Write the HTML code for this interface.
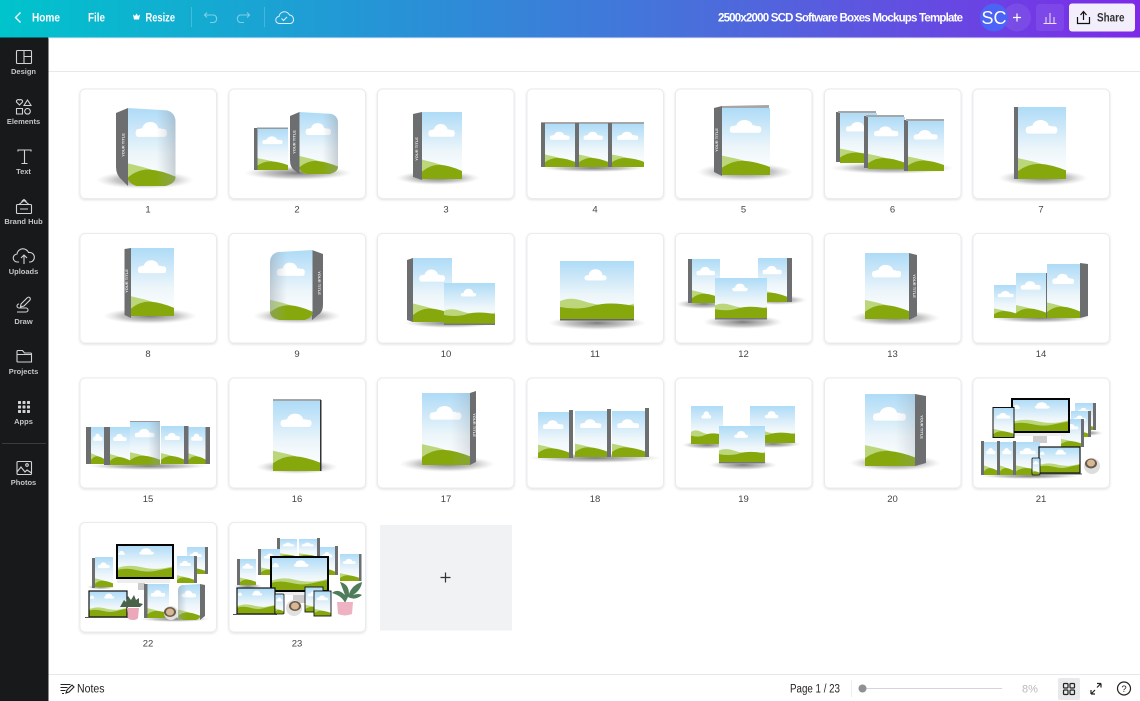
<!DOCTYPE html>
<html><head><meta charset="utf-8"><style>
html,body{margin:0;padding:0;background:#fff;width:1140px;height:701px;overflow:hidden}
svg{display:block;font-family:"Liberation Sans",sans-serif}
.n{font-size:9.5px;fill:#444;text-anchor:middle}
.s{font-size:7.5px;font-weight:bold;fill:#c4c5c7;text-anchor:middle}
.t{font-size:11.5px;font-weight:bold;fill:#fff}
.y{font-size:4px;font-weight:bold;fill:#e6e6e6;text-anchor:middle}
.i{fill:none;stroke:#d2d3d5;stroke-width:1.1}
.h{fill:none;stroke:#fff;stroke-width:1.3}
.c{fill:#fff;stroke:#e9ebee;stroke-width:1;filter:url(#cs)}
.g{fill:#6d6e70}
.m{fill:none;stroke:#050505;stroke-width:2}
</style></head><body>
<svg width="1140" height="701" viewBox="0 0 1140 701" xmlns="http://www.w3.org/2000/svg">
<defs>
<linearGradient id="bar" x1="0" x2="1" y1="0" y2="0"><stop offset="0" stop-color="#00c4cc"/><stop offset=".33" stop-color="#2595d6"/><stop offset=".62" stop-color="#4b6ddb"/><stop offset="1" stop-color="#7d2ae8"/></linearGradient>
<linearGradient id="sky" x1="0" x2="0" y1="0" y2="1"><stop offset="0" stop-color="#aedbf7"/><stop offset=".6" stop-color="#eef6fa"/><stop offset="1" stop-color="#fff"/></linearGradient>
<linearGradient id="fade" x1="0" x2="1" y1="0" y2="0"><stop offset=".6" stop-color="#9aa7b3" stop-opacity="0"/><stop offset="1" stop-color="#8f9aa6" stop-opacity=".45"/></linearGradient>
<linearGradient id="fadel" x1="1" x2="0" y1="0" y2="0"><stop offset=".6" stop-color="#9aa7b3" stop-opacity="0"/><stop offset="1" stop-color="#8f9aa6" stop-opacity=".45"/></linearGradient>
<radialGradient id="sh"><stop offset="0" stop-color="#7c7c7c"/><stop offset=".6" stop-color="#b4b4b4" stop-opacity=".75"/><stop offset="1" stop-color="#d4d4d4" stop-opacity="0"/></radialGradient>
<filter id="cs" x="-5%" y="-5%" width="110%" height="110%"><feDropShadow dx="0" dy="1" stdDeviation="1.2" flood-color="#000" flood-opacity=".12"/></filter>
<symbol id="a" viewBox="0 0 100 100" preserveAspectRatio="none">
<rect width="100" height="100" fill="url(#sky)"/>
<g fill="#fff"><rect x="16" y="27" width="66" height="10" rx="5"/><ellipse cx="47" cy="27" rx="17" ry="9"/><ellipse cx="66" cy="31" rx="10" ry="5"/><ellipse cx="29" cy="31" rx="9" ry="5"/></g>
<path d="M0 71Q30 75 60 81T100 88V100H0Z" fill="#bcd67c"/>
<path d="M0 89Q22 78 46 79T100 88V100H0Z" fill="#86a80c"/>
</symbol>
<symbol id="r" viewBox="0 0 100 100" preserveAspectRatio="none">
<clipPath id="rc"><path d="M0 0L82 3Q100 6 100 18V88Q100 97 78 100H18Q6 98 0 92Z"/></clipPath>
<g clip-path="url(#rc)"><use href="#a" width="100" height="100"/><rect width="100" height="100" fill="url(#fade)"/></g>
</symbol>
<symbol id="l" viewBox="0 0 100 100" preserveAspectRatio="none">
<clipPath id="lc"><path d="M100 0L18 3Q0 6 0 18V88Q0 97 22 100H82Q94 98 100 92Z"/></clipPath>
<g clip-path="url(#lc)"><use href="#a" width="100" height="100"/><rect width="100" height="100" fill="url(#fadel)"/></g>
</symbol>
<symbol id="w" viewBox="0 0 100 100" preserveAspectRatio="none">
<rect width="100" height="100" fill="url(#sky)"/>
<g fill="#fff"><rect x="33" y="24" width="30" height="9" rx="4.500"/><ellipse cx="48" cy="23" rx="9" ry="9"/></g>
<path d="M0 68Q14 60 32 68T72 76T100 72V100H0Z" fill="#bcd67c"/>
<path d="M0 78Q25 84 45 76T100 76V100H0Z" fill="#86a80c"/>
</symbol>
<symbol id="w2" viewBox="0 0 100 100" preserveAspectRatio="none">
<rect width="100" height="100" fill="url(#sky)"/>
<g fill="#fff"><rect x="40" y="20" width="26" height="9" rx="4.500"/><ellipse cx="52" cy="19" rx="9" ry="9"/><rect x="2" y="24" width="12" height="6" rx="3"/><ellipse cx="8" cy="23" rx="4" ry="5"/></g>
<path d="M0 70Q20 58 40 66T75 72T100 64V100H0Z" fill="#bcd67c"/>
<path d="M0 76Q15 68 35 76T70 78T100 68V100H0Z" fill="#86a80c"/>
</symbol>
</defs>

<rect width="1140" height="701" fill="#fff"/>
<rect x="48" y="71" width="1092" height="1" fill="#e6e8ea"/>
<rect x="48" y="674" width="1092" height="1" fill="#e6e8ea"/>

<!-- cards -->
<g class="c">
<rect x="80" y="89" width="136.500" height="109.500" rx="5"/><rect x="229" y="89" width="136.500" height="109.500" rx="5"/><rect x="377.500" y="89" width="136.500" height="109.500" rx="5"/><rect x="527" y="89" width="136.500" height="109.500" rx="5"/><rect x="675.500" y="89" width="136.500" height="109.500" rx="5"/><rect x="824.500" y="89" width="136.500" height="109.500" rx="5"/><rect x="973" y="89" width="136.500" height="109.500" rx="5"/>
<rect x="80" y="233.500" width="136.500" height="109.500" rx="5"/><rect x="229" y="233.500" width="136.500" height="109.500" rx="5"/><rect x="377.500" y="233.500" width="136.500" height="109.500" rx="5"/><rect x="527" y="233.500" width="136.500" height="109.500" rx="5"/><rect x="675.500" y="233.500" width="136.500" height="109.500" rx="5"/><rect x="824.500" y="233.500" width="136.500" height="109.500" rx="5"/><rect x="973" y="233.500" width="136.500" height="109.500" rx="5"/>
<rect x="80" y="378" width="136.500" height="110" rx="5"/><rect x="229" y="378" width="136.500" height="110" rx="5"/><rect x="377.500" y="378" width="136.500" height="110" rx="5"/><rect x="527" y="378" width="136.500" height="110" rx="5"/><rect x="675.500" y="378" width="136.500" height="110" rx="5"/><rect x="824.500" y="378" width="136.500" height="110" rx="5"/><rect x="973" y="378" width="136.500" height="110" rx="5"/>
<rect x="80" y="522.500" width="136.500" height="109.500" rx="5"/><rect x="229" y="522.500" width="136.500" height="109.500" rx="5"/>
</g>
<rect x="380" y="525" width="132" height="105.500" fill="#f1f2f4"/>
<path d="M445.500 572.500v10M440.500 577.500h10" stroke="#333" stroke-width="1.200"/>

<!-- labels -->
<g class="n">
<text x="148" y="212.500">1</text><text x="297" y="212.500">2</text><text x="446" y="212.500">3</text><text x="595" y="212.500">4</text><text x="743.500" y="212.500">5</text><text x="892.500" y="212.500">6</text><text x="1041" y="212.500">7</text>
<text x="148" y="357">8</text><text x="297" y="357">9</text><text x="446" y="357">10</text><text x="595" y="357">11</text><text x="743.500" y="357">12</text><text x="892.500" y="357">13</text><text x="1041" y="357">14</text>
<text x="148" y="502">15</text><text x="297" y="502">16</text><text x="446" y="502">17</text><text x="595" y="502">18</text><text x="743.500" y="502">19</text><text x="892.500" y="502">20</text><text x="1041" y="502">21</text>
<text x="148" y="646.500">22</text><text x="297" y="646.500">23</text>
</g>

<!-- 1 -->
<ellipse cx="145" cy="180" rx="49" ry="9" fill="url(#sh)"/>
<path class="g" d="M116 113L128 108V186L122 180Q116 175 116 167Z"/>
<use href="#r" x="128" y="108" width="47.500" height="78"/>
<text class="y" transform="translate(124.500,145) rotate(-90)">YOUR TITLE</text>
<!-- 2 -->
<ellipse cx="298" cy="173" rx="54" ry="7" fill="url(#sh)"/>
<rect class="g" x="254" y="128" width="3.500" height="42"/>
<rect x="257" y="127.500" width="31" height="2" fill="#999"/>
<use href="#a" x="257.500" y="129" width="30.500" height="41"/>
<path class="g" d="M290 116L299.500 112V174L294 170Q290 167 290 160Z"/>
<use href="#r" x="299.500" y="112" width="38.500" height="62"/>
<text class="y" transform="translate(295.500,142) rotate(-90)">YOUR TITLE</text>
<!-- 3 -->
<ellipse cx="438" cy="178" rx="42" ry="7" fill="url(#sh)"/>
<path class="g" d="M413 114L422 112V180L413 177Z"/>
<use href="#a" x="422" y="112" width="40" height="67"/>
<text class="y" transform="translate(418,149) rotate(-90)">YOUR TITLE</text>
<!-- 4 -->
<ellipse cx="593" cy="168" rx="52" ry="4" fill="url(#sh)"/>
<rect x="541" y="122" width="103" height="2" fill="#a4a6a8"/>
<rect class="g" x="541" y="123" width="4" height="44"/><use href="#a" x="545" y="124" width="30" height="43"/>
<rect class="g" x="575" y="123" width="4" height="44"/><use href="#a" x="579" y="124" width="29" height="43"/>
<rect class="g" x="608" y="123" width="4" height="44"/><use href="#a" x="612" y="124" width="32" height="43"/>
<!-- 5 -->
<ellipse cx="745" cy="172" rx="48" ry="9" fill="url(#sh)"/>
<path d="M722 106L769 105V108L722 109Z" fill="#a4a6a8"/>
<path class="g" d="M714 108L722 106V176L714 172Z"/>
<use href="#a" x="722" y="108" width="48" height="67"/>
<text class="y" transform="translate(718,140) rotate(-90)">YOUR TITLE</text>
<!-- 6 -->
<ellipse cx="892" cy="168" rx="62" ry="6" fill="url(#sh)"/>
<rect class="g" x="836" y="112" width="4" height="50"/><use href="#a" x="840" y="113" width="37" height="50"/><rect x="838" y="111" width="38" height="2" fill="#a4a6a8"/>
<rect class="g" x="864" y="116" width="4" height="52"/><use href="#a" x="868" y="117" width="37" height="52"/><rect x="866" y="115" width="38" height="2" fill="#a4a6a8"/>
<rect class="g" x="904" y="120" width="4" height="51"/><use href="#a" x="908" y="121" width="36" height="50"/><rect x="906" y="119" width="38" height="2" fill="#a4a6a8"/>
<!-- 7 -->
<ellipse cx="1043" cy="178" rx="45" ry="8" fill="url(#sh)"/>
<rect class="g" x="1014" y="107" width="4" height="72"/>
<use href="#a" x="1018" y="107" width="48" height="72"/>
<!-- 8 -->
<ellipse cx="150" cy="316" rx="47" ry="8" fill="url(#sh)"/>
<path class="g" d="M124.500 249L131 248V318L124.500 315Z"/>
<use href="#a" x="131" y="248" width="43" height="68"/>
<text class="y" transform="translate(128,281) rotate(-90)">YOUR TITLE</text>
<!-- 9 -->
<ellipse cx="297" cy="316" rx="44" ry="8" fill="url(#sh)"/>
<path class="g" d="M323 254L312 250V320L318 315Q323 312 323 305Z"/>
<use href="#l" x="270" y="250" width="42.500" height="70"/>
<text class="y" transform="translate(318,283) rotate(90)">YOUR TITLE</text>
<!-- 10 -->
<ellipse cx="450" cy="323" rx="46" ry="5" fill="url(#sh)"/>
<path class="g" d="M407 260L413 258V322L407 320Z"/>
<use href="#a" x="413" y="258" width="39" height="64"/>
<use href="#w" x="444" y="283" width="51" height="41"/>
<rect x="444" y="323.500" width="51" height="1.500" fill="#777"/>
<!-- 11 -->
<ellipse cx="597" cy="323" rx="49" ry="7" fill="url(#sh)"/>
<use href="#w" x="560" y="261" width="74" height="59"/>
<rect x="560" y="319" width="74" height="1.500" fill="#666"/>
<!-- 12 -->
<ellipse cx="704" cy="304" rx="28" ry="5" fill="url(#sh)"/>
<ellipse cx="777" cy="300" rx="30" ry="5" fill="url(#sh)"/>
<ellipse cx="743" cy="322" rx="40" ry="7" fill="url(#sh)"/>
<rect class="g" x="688" y="259" width="4" height="44"/><use href="#a" x="692" y="259" width="28" height="44"/>
<use href="#a" x="758" y="258" width="29" height="44"/><rect class="g" x="787" y="258" width="5" height="44"/>
<use href="#w" x="715" y="278" width="52" height="40"/><rect x="715" y="318" width="52" height="1.500" fill="#777"/>
<!-- 13 -->
<ellipse cx="895" cy="318" rx="45" ry="8" fill="url(#sh)"/>
<use href="#a" x="865" y="253" width="44" height="66"/>
<path class="g" d="M909 253L917 255V316L909 320Z"/>
<text class="y" transform="translate(913,286) rotate(90)">YOUR TITLE</text>
<!-- 14 -->
<ellipse cx="1040" cy="318" rx="50" ry="5" fill="url(#sh)"/>
<use href="#a" x="994" y="285" width="24" height="33"/><rect class="g" x="1018" y="285" width="2.500" height="33"/>
<use href="#a" x="1016" y="273" width="30" height="45"/><rect class="g" x="1046" y="273" width="3.500" height="45"/>
<use href="#a" x="1047" y="264" width="33" height="54"/><path class="g" d="M1080 263L1088 264V316L1080 318Z"/>
<!-- 15 -->
<ellipse cx="148" cy="466" rx="60" ry="4" fill="url(#sh)"/>
<rect class="g" x="86" y="427" width="5" height="37"/><use href="#a" x="91" y="427" width="14" height="37"/>
<rect class="g" x="104" y="427" width="6" height="38"/><use href="#a" x="110" y="427" width="20" height="38"/>
<use href="#a" x="161" y="426" width="23" height="38"/><rect class="g" x="184" y="426" width="4.500" height="38"/>
<use href="#a" x="188.500" y="427" width="17" height="37"/><rect class="g" x="205.500" y="427" width="4.500" height="37"/>
<use href="#a" x="130" y="421" width="30" height="44"/><rect x="130" y="421" width="30" height="44" fill="url(#fade)"/><rect x="130" y="421" width="30" height="1" fill="#999"/>
<!-- 16 -->
<ellipse cx="297" cy="467" rx="41" ry="7" fill="url(#sh)"/>
<rect x="273" y="399" width="48" height="2" fill="#a4a6a8"/>
<use href="#a" x="273" y="401" width="47" height="70"/>
<rect x="320" y="400" width="1.500" height="71" fill="#333"/>
<!-- 17 -->
<ellipse cx="447" cy="464" rx="48" ry="8" fill="url(#sh)"/>
<use href="#a" x="422" y="393" width="48" height="72"/>
<rect x="422" y="393" width="48" height="72" fill="url(#fade)" opacity=".6"/>
<path class="g" d="M470 393L476 391V462L470 465Z"/>
<text class="y" transform="translate(473,425) rotate(90)">YOUR TITLE</text>
<!-- 18 -->
<ellipse cx="595" cy="458" rx="67" ry="5" fill="url(#sh)"/>
<use href="#a" x="538" y="412" width="31" height="46"/><rect class="g" x="569" y="410" width="4" height="48"/>
<use href="#a" x="575" y="411" width="32" height="46"/><rect class="g" x="607" y="409" width="4" height="48"/>
<use href="#a" x="612" y="411" width="33" height="46"/><rect class="g" x="645" y="408" width="4" height="49"/>
<!-- 19 -->
<ellipse cx="707" cy="445" rx="25" ry="4" fill="url(#sh)"/>
<ellipse cx="773" cy="444" rx="28" ry="4" fill="url(#sh)"/>
<ellipse cx="743" cy="465" rx="34" ry="5" fill="url(#sh)"/>
<use href="#w" x="691" y="406" width="32" height="38"/>
<use href="#w" x="750" y="406" width="45" height="37"/>
<use href="#w" x="719" y="426" width="46" height="36"/><rect x="719" y="462" width="46" height="1.300" fill="#777"/>
<!-- 20 -->
<ellipse cx="895" cy="463" rx="46" ry="8" fill="url(#sh)"/>
<use href="#a" x="865" y="394" width="50" height="72"/>
<rect x="865" y="394" width="50" height="72" fill="url(#fade)" opacity=".6"/>
<path class="g" d="M915 394L926 396V463L915 466Z"/>
<text class="y" transform="translate(920.500,427) rotate(90)">YOUR TITLE</text>
<!-- 21 -->
<ellipse cx="1030" cy="476" rx="50" ry="3" fill="url(#sh)"/>
<ellipse cx="1085" cy="433" rx="18" ry="3" fill="url(#sh)"/>
<use href="#a" x="1075" y="403" width="18" height="27"/><rect class="g" x="1093" y="403" width="3" height="27"/>
<use href="#a" x="1071" y="411" width="18" height="26"/><rect class="g" x="1088" y="411" width="3" height="26"/>
<use href="#a" x="1061" y="419" width="21" height="28"/><rect class="g" x="1081" y="419" width="3" height="28"/>
<rect x="1033" y="436" width="14" height="7" fill="#ccc"/><rect x="1014" y="432" width="52" height="4" fill="#eee"/>
<use href="#w2" x="1012" y="399" width="57" height="33"/><rect class="m" x="1012" y="399" width="57" height="33"/>
<use href="#a" x="993" y="407.500" width="21" height="30"/><rect x="993" y="407.500" width="21" height="30" fill="none" stroke="#111" stroke-width="1"/>
<rect class="g" x="981" y="441" width="3" height="34"/><use href="#a" x="984" y="442" width="14" height="33"/>
<rect class="g" x="997" y="441" width="3" height="34"/><use href="#a" x="1000" y="442" width="14" height="33"/>
<rect class="g" x="1013" y="441" width="3" height="34"/><use href="#a" x="1016" y="442" width="24" height="33"/>
<use href="#w2" x="1039" y="447" width="41" height="26"/><rect x="1039" y="447" width="41" height="26" fill="none" stroke="#111" stroke-width="1.200"/>
<rect x="1034" y="473.500" width="48" height="1" fill="#555"/>
<use href="#a" x="1032" y="458" width="8" height="17"/><rect x="1032" y="458" width="8" height="17" rx="1" fill="none" stroke="#111" stroke-width=".8"/>
<circle cx="1092" cy="466" r="8" fill="#ddd"/><ellipse cx="1091" cy="463.500" rx="6" ry="5" fill="#6b5a4a"/><ellipse cx="1091" cy="463" rx="4" ry="3.500" fill="#d8b894"/>
<!-- 22 -->
<ellipse cx="101" cy="587" rx="14" ry="2.500" fill="url(#sh)"/>
<ellipse cx="175" cy="619" rx="35" ry="3" fill="url(#sh)"/>
<use href="#a" x="187" y="547" width="18" height="27"/><rect class="g" x="205" y="547" width="3" height="27"/>
<use href="#a" x="177" y="556" width="17" height="27"/><rect class="g" x="194" y="556" width="3" height="27"/>
<rect x="117" y="578" width="53" height="5" fill="#eee"/><rect x="138" y="583" width="7" height="7" fill="#ccc"/>
<use href="#w2" x="117" y="545" width="56" height="33"/><rect class="m" x="117" y="545" width="56" height="33"/>
<rect class="g" x="92" y="558" width="3" height="30"/><use href="#a" x="95" y="557" width="18" height="30"/>
<rect class="g" x="144" y="584" width="3.500" height="34"/><use href="#a" x="147.500" y="584" width="21.500" height="34"/>
<use href="#l" x="178" y="584" width="22" height="36"/><path class="g" d="M200 584L205 585V616L200 620Z"/>
<use href="#w2" x="89" y="591" width="38" height="26"/><rect x="89" y="591" width="38" height="26" fill="none" stroke="#111" stroke-width="1.200"/>
<rect x="85" y="617" width="44" height="1" fill="#555"/>
<path d="M120 607l4-7 2 2 2-6 3 4 3-5 2 5 3-2 0 5 4 1-3 3z" fill="#49634a"/>
<path d="M127 608h12l-1 10q-1 2-5 2t-5-2z" fill="#eca8bb"/>
<circle cx="171" cy="613" r="7" fill="#e0e0e0"/><ellipse cx="170" cy="612" rx="6" ry="5" fill="#6b5a4a"/><ellipse cx="170" cy="612" rx="4" ry="3.500" fill="#d8b894"/>
<!-- 23 -->
<ellipse cx="248" cy="586" rx="14" ry="2.500" fill="url(#sh)"/>
<rect class="g" x="277" y="538" width="3" height="19"/><use href="#a" x="280" y="539" width="17" height="20"/>
<use href="#a" x="299" y="539" width="18" height="20"/><rect class="g" x="317" y="538" width="3" height="20"/>
<rect class="g" x="258" y="549" width="3" height="26"/><use href="#a" x="261" y="549" width="19" height="26"/>
<use href="#a" x="320" y="547" width="15" height="28"/><rect class="g" x="335" y="546" width="3" height="29"/>
<use href="#a" x="340" y="554" width="19" height="27"/><rect class="g" x="359" y="554" width="2.500" height="27"/>
<rect class="g" x="237" y="559" width="3" height="26"/><use href="#a" x="240" y="559" width="16" height="26"/>
<rect x="273" y="591" width="53" height="4" fill="#eee"/><rect x="293" y="595" width="14" height="8" fill="#ccc"/>
<use href="#w2" x="271" y="557" width="57" height="34"/><rect class="m" x="271" y="557" width="57" height="34"/>
<use href="#w2" x="237" y="588" width="38" height="26"/><rect x="237" y="588" width="38" height="26" fill="none" stroke="#111" stroke-width="1.200"/>
<rect x="233" y="614" width="44" height="1" fill="#555"/>
<use href="#a" x="275" y="594" width="9" height="20"/><rect x="275" y="594" width="9" height="20" rx="1" fill="none" stroke="#111" stroke-width=".8"/>
<circle cx="294" cy="608" r="8" fill="#e0e0e0"/><ellipse cx="295" cy="606" rx="6" ry="5" fill="#6b5a4a"/><ellipse cx="295" cy="606" rx="4" ry="3.500" fill="#d8b894"/>
<use href="#a" x="305" y="587" width="18" height="25"/><rect x="305" y="587" width="18" height="25" fill="none" stroke="#111" stroke-width=".9"/>
<use href="#a" x="314" y="591" width="17" height="25"/><rect x="314" y="591" width="17" height="25" fill="none" stroke="#111" stroke-width=".9"/>
<path d="M345 603q-3-7-13-10q6-5 13 2q-3-8-5-13q9 2 9 12q3-9 13-12q-1 8-9 13q6-2 9 0q-7 6-14 2z" fill="#4f7d5c"/>
<path d="M337 602h16l-1 12q-7 3-14 0z" fill="#eeb3c3"/>

<!-- sidebar -->
<rect x="0" y="37" width="48.500" height="664" fill="#18191b"/>
<g class="i">
<path d="M17.500 50.500h13a1 1 0 0 1 1 1v11a1 1 0 0 1-1 1h-13a1 1 0 0 1-1-1v-11a1 1 0 0 1 1-1zM24 50.500v13M24 56.500h7.500"/>
<path d="M19.500 105l-3-3a1.900 1.900 0 0 1 3-2a1.900 1.900 0 0 1 3 2zM27.500 100l3.500 5.500h-7zM16.500 108.500h6v5.500h-6zM27.500 108.500a2.800 2.800 0 1 0 .01 0z"/>
<path d="M18 151.500v-1.500h13v1.500M24.500 150v13M21.500 163.500h6"/>
<path d="M17.500 204.500h13a1 1 0 0 1 1 1v7a1 1 0 0 1-1 1h-13a1 1 0 0 1-1-1v-7a1 1 0 0 1 1-1zM19 204.500l5-4 5 4M20 209h8M21.500 201.500l2.500-2 2.500 2"/>
<path d="M19 262h-1.500a4 4 0 0 1-.5-8a6 6 0 0 1 11.500-1.500a4.500 4.500 0 0 1 2 9.500h-1.500M24 264v-9M21 258l3-3 3 3"/>
<path d="M19 312h9a2 2 0 0 0 0-4h-7a2 2 0 0 1 0-4M23 304l6-6a1.500 1.500 0 0 1 3 2l-6 6-3.500 1z" transform="translate(-2,0)"/>
<path d="M17 361.500v-10a1 1 0 0 1 1-1h4.500l2 2.500h6a1 1 0 0 1 1 1v8h-14zM17 354.500h14.500"/>
<path d="M18 461.500h12.500a1 1 0 0 1 1 1v11a1 1 0 0 1-1 1h-12.500a1 1 0 0 1-1-1v-11a1 1 0 0 1 1-1zM17 472l4-5 4 5 2-2 4.500 3"/><circle cx="27" cy="465" r="1.300"/>
</g>
<g fill="#d2d3d5"><rect x="18" y="401" width="3" height="3" rx=".6"/><rect x="22.500" y="401" width="3" height="3" rx=".6"/><rect x="27" y="401" width="3" height="3" rx=".6"/><rect x="18" y="405.500" width="3" height="3" rx=".6"/><rect x="22.500" y="405.500" width="3" height="3" rx=".6"/><rect x="27" y="405.500" width="3" height="3" rx=".6"/><rect x="18" y="410" width="3" height="3" rx=".6"/><rect x="22.500" y="410" width="3" height="3" rx=".6"/><rect x="27" y="410" width="3" height="3" rx=".6"/></g>
<rect x="2" y="443" width="44" height="1" fill="#3a3b3d"/>
<g class="s">
<text x="23.500" y="74">Design</text><text x="23.500" y="124">Elements</text><text x="23.500" y="174">Text</text><text x="23.500" y="224">Brand Hub</text><text x="23.500" y="274">Uploads</text><text x="23.500" y="324">Draw</text><text x="23.500" y="374">Projects</text><text x="23.500" y="424">Apps</text><text x="23.500" y="485">Photos</text>
</g>

<!-- top bar -->
<rect width="1140" height="37.500" fill="url(#bar)"/>
<rect y="37.500" x="48" width="1092" height="1" fill="#d9d4f5" opacity=".6"/>
<path class="h" d="M20.500 12.500l-5 5 5 5" stroke-width="1.500"/>
<text class="t" x="32" y="21.500" textLength="28" lengthAdjust="spacingAndGlyphs">Home</text>
<text class="t" x="88" y="21.500" textLength="17" lengthAdjust="spacingAndGlyphs">File</text>
<path d="M133 14.500l2 1.500 1.500-2.500 1.500 2.500 2-1.500-1 5h-5z" fill="#fff"/>
<text class="t" x="145.500" y="21.500" textLength="29.500" lengthAdjust="spacingAndGlyphs">Resize</text>
<rect x="191" y="7" width="1" height="20" fill="#fff" opacity=".2"/>
<rect x="264" y="7" width="1" height="20" fill="#fff" opacity=".2"/>
<path d="M207 12.500l-2.500 2.500 2.500 2.500M204.800 15h9.200a4 4 0 0 1 0 7.500h-4" fill="none" stroke="#fff" stroke-opacity=".45" stroke-width="1.100"/>
<path d="M247 12.500l2.500 2.500-2.500 2.500M249.200 15h-9.200a4 4 0 0 0 0 7.500h4" fill="none" stroke="#fff" stroke-opacity=".45" stroke-width="1.100"/>
<path d="M281 23.500h-1.500a3.500 3.500 0 0 1-.5-7a5.500 5.500 0 0 1 10.500-1.500a4.500 4.500 0 0 1 1.500 8.500z" fill="none" stroke="#fff" stroke-opacity=".85" stroke-width="1"/>
<path d="M281.500 18.500l2 2 3.500-3.500" fill="none" stroke="#fff" stroke-opacity=".85" stroke-width="1"/>
<text class="t" x="718" y="21.500" textLength="245" lengthAdjust="spacing">2500x2000 SCD Software Boxes Mockups Template</text>
<circle cx="1017" cy="17.500" r="14" fill="#fff" fill-opacity=".08"/>
<circle cx="994" cy="17.500" r="14" fill="#4c63f5"/>
<text x="994" y="24" font-size="18" fill="#fff" text-anchor="middle">SC</text>
<path d="M1017 13.500v8M1013 17.500h8" stroke="#fff" stroke-width="1.200"/>
<rect x="1036" y="4" width="28" height="27" rx="3" fill="#fff" fill-opacity=".08"/>
<path d="M1043.500 23.500h13M1046 23v-6M1050 23v-10M1054 23v-6" stroke="#fff" stroke-opacity=".85" stroke-width="1"/>
<rect x="1069" y="3.500" width="66" height="28" rx="3" fill="#f3eefb"/>
<path d="M1077.500 17v6.500h12V17M1083.500 20v-8M1080.500 15l3-3.500 3 3.500" fill="none" stroke="#111" stroke-width="1.200"/>
<text x="1097" y="21.500" font-size="11.500" font-weight="bold" fill="#333" textLength="27.500" lengthAdjust="spacingAndGlyphs">Share</text>

<!-- bottom bar -->
<path d="M60.500 684.500h10M60.500 687.500h7M60.500 690.500h5M62 693.500h2M66 693l1-3 5-5 2 2-5 5z" fill="none" stroke="#222" stroke-width="1.100"/>
<text x="77" y="692.500" font-size="11.500" fill="#222" textLength="27.500" lengthAdjust="spacingAndGlyphs">Notes</text>
<text x="790" y="692.500" font-size="11.500" fill="#222" textLength="50" lengthAdjust="spacingAndGlyphs">Page 1 / 23</text>
<rect x="851" y="680" width="1" height="17" fill="#eceef0"/>
<rect x="862" y="688" width="140" height="1" fill="#d4d5d7"/>
<circle cx="862.500" cy="688.500" r="4" fill="#8f9092"/>
<text x="1022" y="692.500" font-size="11" fill="#b9babc">8%</text>
<rect x="1058" y="678" width="22" height="22" rx="2" fill="#e8e9eb"/>
<g fill="none" stroke="#222" stroke-width="1.200">
<rect x="1063.500" y="683.500" width="4.500" height="4.500" rx="1"/><rect x="1070" y="683.500" width="4.500" height="4.500" rx="1"/><rect x="1063.500" y="690" width="4.500" height="4.500" rx="1"/><rect x="1070" y="690" width="4.500" height="4.500" rx="1"/>
<path d="M1091 694h4M1091 694v-4M1091 694l4-4M1101 683.500h-4M1101 683.500v4M1101 683.500l-4 4"/>
<circle cx="1124" cy="688.500" r="6.500"/>
</g>
<text x="1124" y="692" font-size="9.500" fill="#222" text-anchor="middle">?</text>
</svg>
</body></html>
